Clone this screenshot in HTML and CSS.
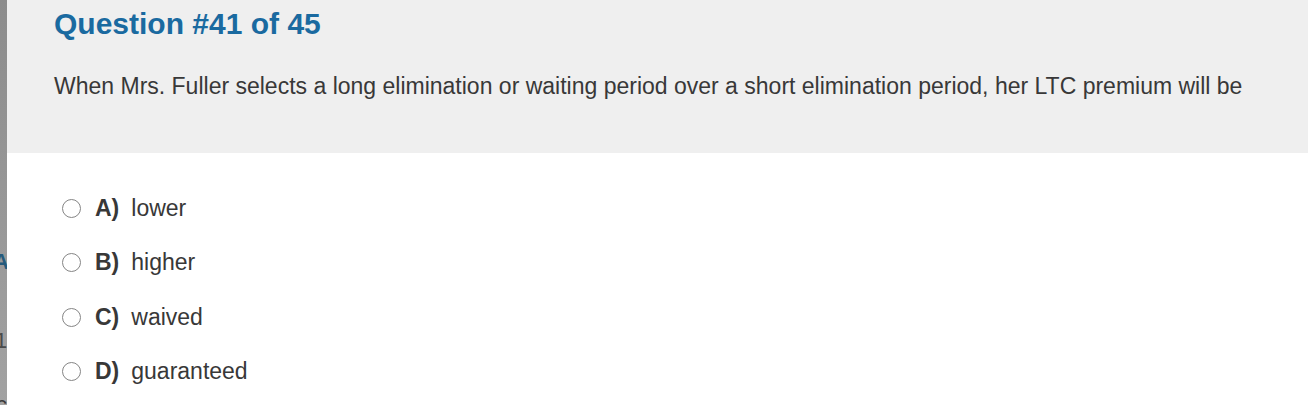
FILE: index.html
```html
<!DOCTYPE html>
<html lang="en">
<head>
  <meta charset="UTF-8" />
  <title>Question #41 of 45</title>
  <link rel="stylesheet" href="styles.css">
</head>
<body>
  <div class="backdrop">
    <span class="peek peek-a">A</span>
    <span class="peek peek-1">1</span>
    <span class="peek peek-c">c</span>
  </div>

  <div class="modal">
    <div class="question">
      <h1>Question #41 of 45</h1>
      <p>When Mrs. Fuller selects a long elimination or waiting period over a short elimination period, her LTC premium will be</p>
    </div>

    <ul class="answers">
      <li><label><input type="radio" name="q41"><b>A)</b><span>lower</span></label></li>
      <li><label><input type="radio" name="q41"><b>B)</b><span>higher</span></label></li>
      <li><label><input type="radio" name="q41"><b>C)</b><span>waived</span></label></li>
      <li><label><input type="radio" name="q41"><b>D)</b><span>guaranteed</span></label></li>
    </ul>
  </div>
</body>
</html>
```

FILE: styles.css
```css
:root {
  --panel: #efefef;
  --text: #383838;
  --title: #1a6aa0;
}
* { box-sizing: border-box; margin: 0; padding: 0; }
html, body { height: 100%; }
body {
  font-family: 'Liberation Sans', Arial, sans-serif;
  color: var(--text);
  display: flex;
  overflow: hidden;
  background: #fff;
}

/* dimmed page behind the dialog */
.backdrop {
  width: 7px;
  flex: none;
  background: linear-gradient(#8c8c8c, #a2a2a2);
  position: relative;
  overflow: hidden;
}
.peek {
  position: absolute;
  left: 0;
  font-size: 22px;
  line-height: 1;
}
.peek-a { top: 251px; color: #255a7c; font-weight: 700; text-indent: -7px; }
.peek-1 { top: 330px; color: #4a4a4a; text-indent: -5px; }
.peek-c { top: 394px; color: #3a3a3a; text-indent: -4px; }

.modal { flex: 1; }

.question {
  background: var(--panel);
  height: 153px;
  padding: 6px 47px 0;
}
h1 {
  color: var(--title);
  font-size: 30px;
  font-weight: 700;
  line-height: 36px;
  margin-bottom: 30px;
}
.question p {
  font-size: 23px;
  line-height: 28px;
}

.answers {
  list-style: none;
  padding: 27.75px 0 0 55px;
}
.answers li {
  height: 54.5px;
  display: flex;
  align-items: center;
}
.answers label {
  display: flex;
  align-items: center;
  font-size: 23px;
}
.answers input {
  appearance: none;
  width: 19px;
  height: 19px;
  border: 1.5px solid #858585;
  border-radius: 50%;
  background: #fff;
  margin: 0 14px 0 0;
}
.answers b { margin-right: 12px; }
```
